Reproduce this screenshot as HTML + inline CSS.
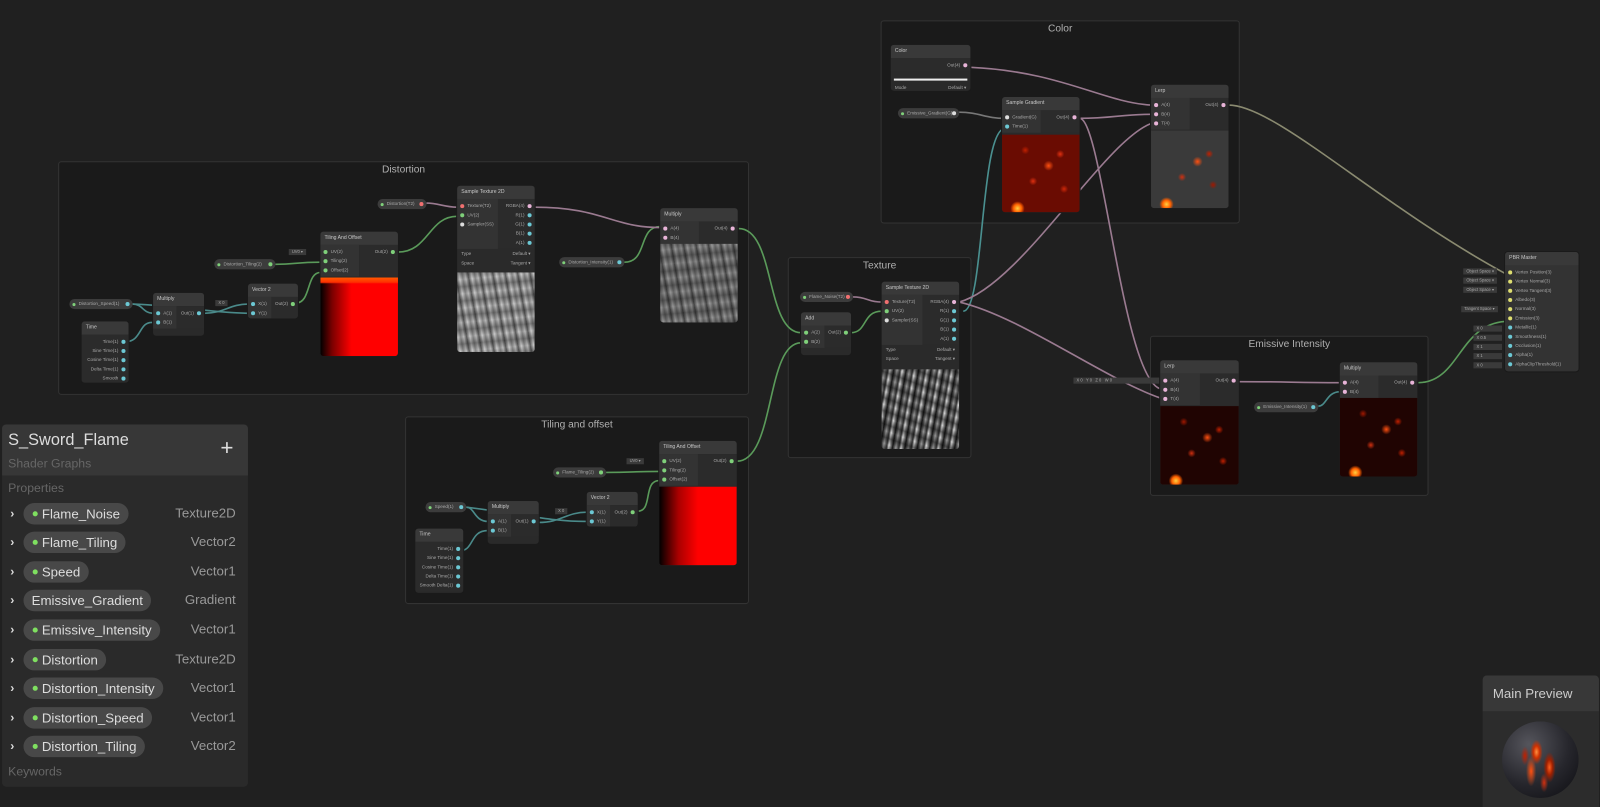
<!DOCTYPE html>
<html><head><meta charset="utf-8">
<style>
*{box-sizing:border-box;margin:0;padding:0}
html,body{width:1600px;height:807px;overflow:hidden;background:#202020}
#root{width:1568px;height:791px;position:relative;transform:scale(1.0204);transform-origin:0 0;font-family:"Liberation Sans",sans-serif}
.g{position:absolute;background:#1a1a1a;border:1px solid #333;border-radius:3px}
.g .t{text-align:center;color:#b0b0b0;font-size:10px;margin-top:2px}
.n{position:absolute;background:#2a2a2a;border-radius:3px;overflow:hidden;box-shadow:0 0 0 1px #1a1a1a}
.h{height:13px;background:#393939;color:#c8c8c8;font-size:5px;line-height:13px;padding-left:4px}
.row{display:flex}
.in{background:#333;flex:1;padding:2px 0}
.out{background:#2b2b2b;flex:1;padding:2px 0;text-align:right}
.p{font-size:4.5px;color:#aaa;height:9px;line-height:9px;position:relative;padding:0 4px 0 10px}
.out .p{padding:0 10px 0 4px}
.p i{position:absolute;top:2.5px;width:4px;height:4px;border-radius:50%;left:3px;background:#7fd07a}
.out .p i{left:auto;right:3px}
.c{background:#6cc8d4!important}.k{background:#e8b4d8!important}.r{background:#f07070!important}.w{background:#ddd!important}.y{background:#dede70!important}
.pill{position:absolute;height:10px;border-radius:5px;background:#3c3c3c;color:#aaa;font-size:4.5px;line-height:10px;padding:0 10px 0 9px}
.pill:before{content:"";position:absolute;left:3px;top:4px;width:3px;height:3px;border-radius:50%;background:#7fd07a}
.pill i{position:absolute;right:3px;top:3px;width:4px;height:4px;border-radius:50%;background:#6cc8d4}
.red{background:linear-gradient(#ff5a00 0,#ff3000 6%,transparent 8%),linear-gradient(90deg,#000 0,#7a0000 15%,#f00 40%,#f00)}
.noise{background:repeating-linear-gradient(80deg,#666 0,#ccc 3px,#888 6px,#bbb 9px,#555 12px),repeating-linear-gradient(-5deg,rgba(0,0,0,.35) 0,rgba(255,255,255,.15) 7px,rgba(0,0,0,.35) 14px);background-blend-mode:multiply}
.noise2{background:repeating-linear-gradient(100deg,#222 0,#999 3px,#333 6px,#ddd 8px,#111 12px),repeating-linear-gradient(20deg,rgba(0,0,0,.5) 0,rgba(255,255,255,.2) 6px,rgba(0,0,0,.5) 12px);background-blend-mode:multiply}
.fire{background:radial-gradient(circle at 20% 95%,#ffd040 0,#ff6000 4px,transparent 7px),radial-gradient(circle at 60% 40%,#ff5010 0,transparent 5px),radial-gradient(circle at 40% 60%,#e03010 0,transparent 4px),radial-gradient(circle at 75% 25%,#e03010 0,transparent 4px),radial-gradient(circle at 30% 20%,#c02000 0,transparent 4px),radial-gradient(circle at 80% 70%,#d02808 0,transparent 4px),#6a0c02}
.fire2{background:radial-gradient(circle at 20% 95%,#ffd040 0,#ff6000 4px,transparent 7px),radial-gradient(circle at 60% 40%,#ff5010 0,transparent 5px),radial-gradient(circle at 40% 60%,#d03010 0,transparent 4px),radial-gradient(circle at 75% 30%,#c02000 0,transparent 4px),radial-gradient(circle at 30% 20%,#a01800 0,transparent 4px),radial-gradient(circle at 80% 70%,#c02000 0,transparent 4px),#200402}
.fire3{background:radial-gradient(circle at 20% 95%,#ffd040 0,#ff6000 4px,transparent 7px),radial-gradient(circle at 60% 40%,#ff5010 0,transparent 5px),radial-gradient(circle at 40% 60%,#d03010 0,transparent 4px),radial-gradient(circle at 75% 30%,#c02000 0,transparent 4px),radial-gradient(circle at 80% 70%,#a01800 0,transparent 4px),#3a3a3a}
.dd{position:absolute;height:6px;background:#3a3a3a;color:#aaa;font-size:4px;line-height:6px;padding:0 3px}
.bb{position:absolute;left:2px;top:416px;width:241px;height:355px;background:#2a2a2a;border-radius:4px;overflow:hidden}
.bbh{height:50px;background:#373737;position:relative}
.prop{position:absolute;left:0;width:241px;height:22px}
.prop .ar{position:absolute;left:8px;top:3px;color:#ddd;font-size:12px;font-weight:bold}
.prop .pl{position:absolute;left:21px;top:0;height:21px;border-radius:11px;background:#484848;color:#ddd;font-size:13px;line-height:21px;padding:0 8px 0 18px}
.prop .pl.nd{padding-left:8px}
.prop .pl b{position:absolute;left:9px;top:8px;width:5px;height:5px;border-radius:50%;background:#7fe060}
.prop .ty{position:absolute;right:12px;top:2px;color:#999;font-size:13px}
</style></head><body><div id="root">

<div class="g" style="left:57px;top:158px;width:677px;height:229px"><div class="t">Distortion</div></div>
<div class="g" style="left:397px;top:408px;width:337px;height:184px"><div class="t">Tiling and offset</div></div>
<div class="g" style="left:772px;top:252px;width:180px;height:197px"><div class="t">Texture</div></div>
<div class="g" style="left:863px;top:20px;width:352px;height:199px"><div class="t">Color</div></div>
<div class="g" style="left:1127px;top:329px;width:273px;height:157px"><div class="t">Emissive Intensity</div></div>

<svg style="position:absolute;left:0;top:0" width="1568" height="791" fill="none" stroke-width="1.6">
<g stroke="#5a9a5a">
<path d="M270 259 C290 259,290 257,314 257"/>
<path d="M290 297 C305 297,300 267,314 267"/>
<path d="M390 247 C420 247,420 212,448 212"/>
<path d="M594 463 C620 463,620 462,646 462"/>
<path d="M625 501 C640 501,630 471,646 471"/>
<path d="M722 452 C760 452,750 336,785 336"/>
<path d="M612 257 C635 257,625 222,647 222"/>
<path d="M724 224 C760 224,750 326,785 326"/>
<path d="M834 326 C850 326,845 305,864 305"/>
<path d="M1390 375 C1430 375,1430 318,1475 315"/>
</g>
<g stroke="#4a8a8a">
<path d="M130 298 C140 298,140 307,150 307"/>
<path d="M130 298 C180 300,200 306,243 307"/>
<path d="M122 335 C140 335,135 315,150 316"/>
<path d="M457 497 C465 497,465 511,478 511"/>
<path d="M457 497 C520 505,540 511,575 511"/>
<path d="M450 540 C465 540,460 520,478 520"/>
<path d="M200 307 C220 307,225 298,243 298"/>
<path d="M528 512 C550 512,555 502,575 502"/>
<path d="M1292 398 C1300 398,1300 384,1313 384"/>
<path d="M944 305 C965 305,960 126,985 126" stroke="#4a9090"/>
</g>
<g stroke="#9a7a90">
<path d="M418 199 C430 199,435 203,448 203"/>
<path d="M524 203 C590 203,600 223,647 223"/>
<path d="M836 291 C850 291,850 296,864 296"/>
<path d="M940 296 C1000 280,1080 140,1128 121"/>
<path d="M940 296 C1000 310,1080 370,1137 390"/>
<path d="M951 66 C1040 70,1080 100,1128 103"/>
<path d="M1058 116 C1090 116,1100 112,1128 112"/>
<path d="M1058 116 C1080 116,1100 370,1137 381"/>
<path d="M1214 374 C1260 374,1270 375,1313 375"/>
<path d="M1204 103 C1250 103,1350 200,1475 268" stroke="#8a8a70"/>
</g>
<path d="M940 110 C960 110,965 116,985 116" stroke="#777"/>
</svg>

<div class="pill" style="left:68px;top:293px;width:62px">Distortion_Speed(1)<i></i></div>
<div class="n" style="left:80px;top:315px;width:46px;height:60px"><div class="h">Time</div>
<div class="out" style="padding-top:2px"><div class="p">Time(1)<i class="c"></i></div><div class="p">Sine Time(1)<i class="c"></i></div><div class="p">Cosine Time(1)<i class="c"></i></div><div class="p">Delta Time(1)<i class="c"></i></div><div class="p">Smooth Delta(1)<i class="c"></i></div></div></div>
<div class="n" style="left:150px;top:287px;width:50px;height:42px"><div class="h">Multiply</div>
<div class="row"><div class="in"><div class="p">A(1)<i class="c"></i></div><div class="p">B(1)<i class="c"></i></div></div><div class="out"><div class="p">Out(1)<i class="c"></i></div></div></div></div>
<div class="dd" style="left:211px;top:294px">X 0</div>
<div class="n" style="left:243px;top:278px;width:49px;height:34px"><div class="h">Vector 2</div>
<div class="row"><div class="in"><div class="p">X(1)<i class="c"></i></div><div class="p">Y(1)<i class="c"></i></div></div><div class="out"><div class="p">Out(2)<i></i></div></div></div></div>
<div class="pill" style="left:210px;top:254px;width:60px">Distortion_Tiling(2)<i style="background:#7fd07a"></i></div>
<div class="dd" style="left:283px;top:244px">UV0 ▾</div>
<div class="n" style="left:314px;top:227px;width:76px;height:122px"><div class="h">Tiling And Offset</div>
<div class="row"><div class="in"><div class="p">UV(2)<i></i></div><div class="p">Tiling(2)<i></i></div><div class="p">Offset(2)<i></i></div></div><div class="out"><div class="p">Out(2)<i></i></div></div></div>
<div class="red" style="position:absolute;left:0;top:45px;width:76px;height:77px"></div></div>
<div class="pill" style="left:370px;top:195px;width:48px">Distortion(T2)<i class="r"></i></div>
<div class="n" style="left:448px;top:182px;width:76px;height:163px"><div class="h">Sample Texture 2D</div>
<div class="row"><div class="in"><div class="p">Texture(T2)<i class="r"></i></div><div class="p">UV(2)<i></i></div><div class="p">Sampler(SS)<i class="w"></i></div></div><div class="out"><div class="p">RGBA(4)<i class="k"></i></div><div class="p">R(1)<i class="c"></i></div><div class="p">G(1)<i class="c"></i></div><div class="p">B(1)<i class="c"></i></div><div class="p">A(1)<i class="c"></i></div></div></div>
<div class="p" style="padding-left:4px">Type<span style="position:absolute;right:4px">Default ▾</span></div><div class="p" style="padding-left:4px">Space<span style="position:absolute;right:4px">Tangent ▾</span></div>
<div class="noise" style="position:absolute;left:0;top:85px;width:76px;height:78px"></div></div>
<div class="pill" style="left:548px;top:252px;width:64px">Distortion_Intensity(1)<i></i></div>
<div class="n" style="left:647px;top:204px;width:76px;height:112px"><div class="h">Multiply</div>
<div class="row"><div class="in"><div class="p">A(4)<i class="k"></i></div><div class="p">B(4)<i class="k"></i></div></div><div class="out"><div class="p">Out(4)<i class="k"></i></div></div></div>
<div class="noise" style="position:absolute;left:0;top:35px;width:76px;height:77px;filter:brightness(.75)"></div></div>

<div class="pill" style="left:417px;top:492px;width:40px">Speed(1)<i></i></div>
<div class="n" style="left:407px;top:518px;width:47px;height:63px"><div class="h">Time</div>
<div class="out"><div class="p">Time(1)<i class="c"></i></div><div class="p">Sine Time(1)<i class="c"></i></div><div class="p">Cosine Time(1)<i class="c"></i></div><div class="p">Delta Time(1)<i class="c"></i></div><div class="p">Smooth Delta(1)<i class="c"></i></div></div></div>
<div class="n" style="left:478px;top:491px;width:50px;height:42px"><div class="h">Multiply</div>
<div class="row"><div class="in"><div class="p">A(1)<i class="c"></i></div><div class="p">B(1)<i class="c"></i></div></div><div class="out"><div class="p">Out(1)<i class="c"></i></div></div></div></div>
<div class="dd" style="left:544px;top:498px">X 0</div>
<div class="n" style="left:575px;top:482px;width:50px;height:34px"><div class="h">Vector 2</div>
<div class="row"><div class="in"><div class="p">X(1)<i class="c"></i></div><div class="p">Y(1)<i class="c"></i></div></div><div class="out"><div class="p">Out(2)<i></i></div></div></div></div>
<div class="pill" style="left:542px;top:458px;width:52px">Flame_Tiling(2)<i style="background:#7fd07a"></i></div>
<div class="dd" style="left:614px;top:449px">UV0 ▾</div>
<div class="n" style="left:646px;top:432px;width:76px;height:122px"><div class="h">Tiling And Offset</div>
<div class="row"><div class="in"><div class="p">UV(2)<i></i></div><div class="p">Tiling(2)<i></i></div><div class="p">Offset(2)<i></i></div></div><div class="out"><div class="p">Out(2)<i></i></div></div></div>
<div style="position:absolute;left:0;top:45px;width:76px;height:77px;background:linear-gradient(90deg,#000,#a00 25%,#f00 50%)"></div></div>

<div class="pill" style="left:784px;top:286px;width:52px">Flame_Noise(T2)<i class="r"></i></div>
<div class="n" style="left:785px;top:306px;width:49px;height:42px"><div class="h">Add</div>
<div class="row"><div class="in"><div class="p">A(2)<i></i></div><div class="p">B(2)<i></i></div></div><div class="out"><div class="p">Out(2)<i></i></div></div></div></div>
<div class="n" style="left:864px;top:276px;width:76px;height:164px"><div class="h">Sample Texture 2D</div>
<div class="row"><div class="in"><div class="p">Texture(T2)<i class="r"></i></div><div class="p">UV(2)<i></i></div><div class="p">Sampler(SS)<i class="w"></i></div></div><div class="out"><div class="p">RGBA(4)<i class="k"></i></div><div class="p">R(1)<i class="c"></i></div><div class="p">G(1)<i class="c"></i></div><div class="p">B(1)<i class="c"></i></div><div class="p">A(1)<i class="c"></i></div></div></div>
<div class="p" style="padding-left:4px">Type<span style="position:absolute;right:4px">Default ▾</span></div><div class="p" style="padding-left:4px">Space<span style="position:absolute;right:4px">Tangent ▾</span></div>
<div class="noise2" style="position:absolute;left:0;top:86px;width:76px;height:78px"></div></div>

<div class="n" style="left:873px;top:44px;width:78px;height:45px"><div class="h">Color</div>
<div class="out"><div class="p">Out(4)<i class="k"></i></div></div>
<div style="position:absolute;left:3px;top:33px;width:72px;height:2px;background:#eee"></div>
<div class="p" style="position:absolute;top:37px;padding-left:4px;width:78px">Mode<span style="position:absolute;right:4px">Default ▾</span></div></div>
<div class="pill" style="left:880px;top:106px;width:60px">Emissive_Gradient(G)<i class="w"></i></div>
<div class="n" style="left:982px;top:95px;width:76px;height:113px"><div class="h">Sample Gradient</div>
<div class="row"><div class="in"><div class="p">Gradient(G)<i class="w"></i></div><div class="p">Time(1)<i class="c"></i></div></div><div class="out"><div class="p">Out(4)<i class="k"></i></div></div></div>
<div class="fire" style="position:absolute;left:0;top:37px;width:76px;height:76px"></div></div>
<div class="n" style="left:1128px;top:83px;width:76px;height:121px"><div class="h">Lerp</div>
<div class="row"><div class="in"><div class="p">A(4)<i class="k"></i></div><div class="p">B(4)<i class="k"></i></div><div class="p">T(4)<i class="k"></i></div></div><div class="out"><div class="p">Out(4)<i class="k"></i></div></div></div>
<div class="fire3" style="position:absolute;left:0;top:45px;width:76px;height:76px"></div></div>

<div class="dd" style="left:1052px;top:370px;width:85px">X 0 &nbsp; Y 0 &nbsp; Z 0 &nbsp; W 0</div>
<div class="n" style="left:1137px;top:353px;width:77px;height:122px"><div class="h">Lerp</div>
<div class="row"><div class="in"><div class="p">A(4)<i class="k"></i></div><div class="p">B(4)<i class="k"></i></div><div class="p">T(4)<i class="k"></i></div></div><div class="out"><div class="p">Out(4)<i class="k"></i></div></div></div>
<div class="fire2" style="position:absolute;left:0;top:45px;width:77px;height:77px"></div></div>
<div class="pill" style="left:1229px;top:394px;width:63px">Emissive_Intensity(1)<i></i></div>
<div class="n" style="left:1313px;top:355px;width:76px;height:112px"><div class="h">Multiply</div>
<div class="row"><div class="in"><div class="p">A(4)<i class="k"></i></div><div class="p">B(4)<i class="k"></i></div></div><div class="out"><div class="p">Out(4)<i class="k"></i></div></div></div>
<div class="fire2" style="position:absolute;left:0;top:35px;width:76px;height:77px"></div></div>

<div class="dd" style="left:1434px;top:263px">Object Space ▾</div>
<div class="dd" style="left:1434px;top:272px">Object Space ▾</div>
<div class="dd" style="left:1434px;top:281px">Object Space ▾</div>
<div class="dd" style="left:1432px;top:300px">Tangent Space ▾</div>
<div class="dd" style="left:1444px;top:319px;width:28px">X 0</div>
<div class="dd" style="left:1444px;top:328px;width:28px">X 0.5</div>
<div class="dd" style="left:1444px;top:337px;width:28px">X 1</div>
<div class="dd" style="left:1444px;top:346px;width:28px">X 1</div>
<div class="dd" style="left:1444px;top:355px;width:28px">X 0</div>
<div class="n" style="left:1475px;top:247px;width:72px;height:117px;background:#333"><div class="h">PBR Master</div>
<div class="in" style="background:#333"><div class="p">Vertex Position(3)<i class="y"></i></div><div class="p">Vertex Normal(3)<i class="y"></i></div><div class="p">Vertex Tangent(3)<i class="y"></i></div><div class="p">Albedo(3)<i class="y"></i></div><div class="p">Normal(3)<i class="y"></i></div><div class="p">Emission(3)<i class="y"></i></div><div class="p">Metallic(1)<i class="c"></i></div><div class="p">Smoothness(1)<i class="c"></i></div><div class="p">Occlusion(1)<i class="c"></i></div><div class="p">Alpha(1)<i class="c"></i></div><div class="p">AlphaClipThreshold(1)<i class="c"></i></div></div></div>

<div class="bb">
<div class="bbh"><div style="position:absolute;left:6px;top:7px;color:#ddd;font-size:16px">S_Sword_Flame</div>
<div style="position:absolute;left:6px;top:31px;color:#666;font-size:12px">Shader Graphs</div>
<div style="position:absolute;left:214px;top:12px;color:#ddd;font-size:22px;line-height:22px">+</div></div>
<div style="position:absolute;left:6px;top:55px;color:#666;font-size:12px">Properties</div>
<div class="prop" style="top:77px"><span class="ar">›</span><span class="pl"><b></b>Flame_Noise</span><span class="ty">Texture2D</span></div>
<div class="prop" style="top:105px"><span class="ar">›</span><span class="pl"><b></b>Flame_Tiling</span><span class="ty">Vector2</span></div>
<div class="prop" style="top:134px"><span class="ar">›</span><span class="pl"><b></b>Speed</span><span class="ty">Vector1</span></div>
<div class="prop" style="top:162px"><span class="ar">›</span><span class="pl nd">Emissive_Gradient</span><span class="ty">Gradient</span></div>
<div class="prop" style="top:191px"><span class="ar">›</span><span class="pl"><b></b>Emissive_Intensity</span><span class="ty">Vector1</span></div>
<div class="prop" style="top:220px"><span class="ar">›</span><span class="pl"><b></b>Distortion</span><span class="ty">Texture2D</span></div>
<div class="prop" style="top:248px"><span class="ar">›</span><span class="pl"><b></b>Distortion_Intensity</span><span class="ty">Vector1</span></div>
<div class="prop" style="top:277px"><span class="ar">›</span><span class="pl"><b></b>Distortion_Speed</span><span class="ty">Vector1</span></div>
<div class="prop" style="top:305px"><span class="ar">›</span><span class="pl"><b></b>Distortion_Tiling</span><span class="ty">Vector2</span></div>
<div style="position:absolute;left:6px;top:333px;color:#666;font-size:12px">Keywords</div>
</div>

<div style="position:absolute;left:1453px;top:662px;width:114px;height:150px;background:#2c2c2c;border-radius:4px;overflow:hidden">
<div style="height:35px;background:#383838;color:#ccc;font-size:13px;padding:10px 0 0 10px">Main Preview</div>
<div style="position:absolute;left:19px;top:45px;width:75px;height:75px;border-radius:50%;background:radial-gradient(ellipse 4px 8px at 45% 40%,#ff9040 0,#d03000 3px,transparent 6px),radial-gradient(ellipse 4px 10px at 62% 60%,#ff6020 0,#a02000 3px,transparent 6px),radial-gradient(ellipse 3px 9px at 38% 65%,#ff5010 0,transparent 5px),radial-gradient(ellipse 3px 7px at 30% 45%,#c02000 0,transparent 4px),radial-gradient(ellipse 3px 7px at 55% 80%,#d03010 0,transparent 4px),radial-gradient(circle at 35% 30%,#55555c 0,#26262c 55%,#0c0c10 100%)"></div>
</div>
</div></body></html>
